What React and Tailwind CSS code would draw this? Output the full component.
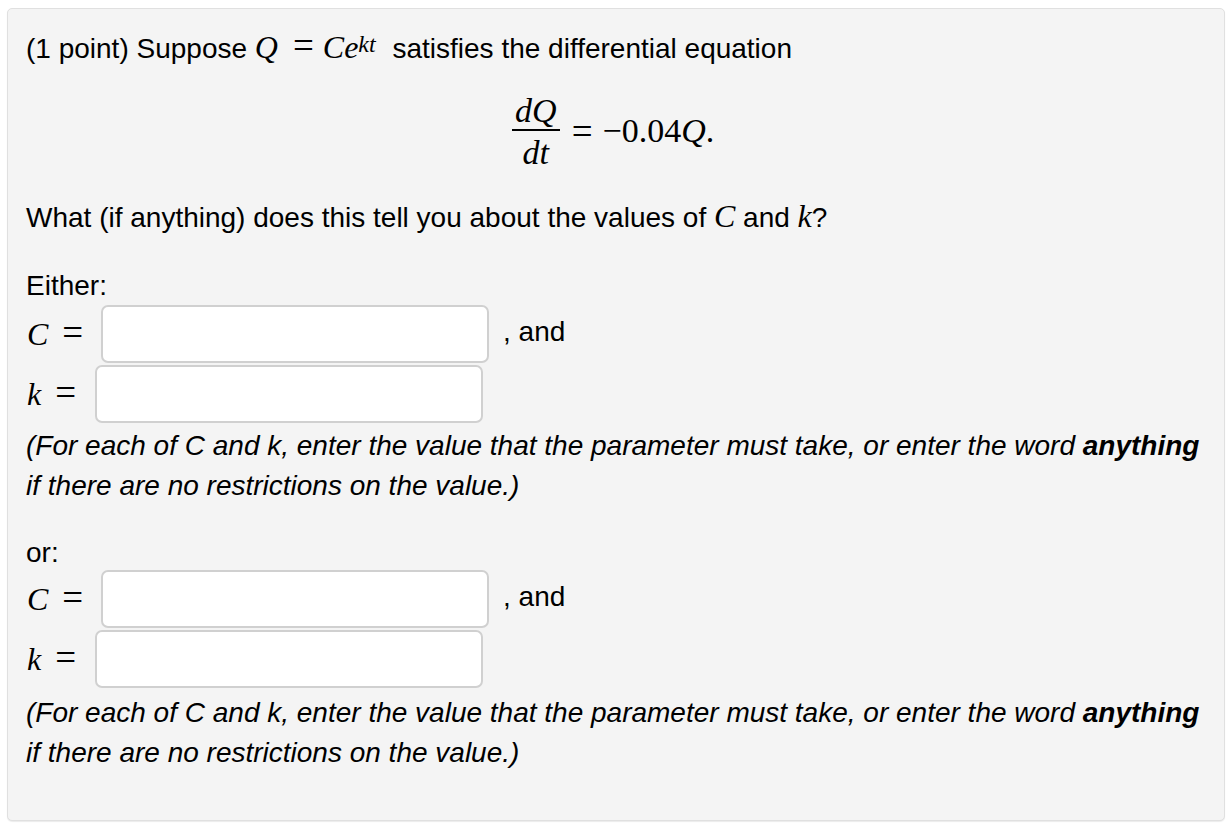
const mathFont = { fontFamily: '"Liberation Serif", "Times New Roman", serif' };

function M({ children, className = "" }) {
  return (
    <span className={`italic ${className}`} style={mathFont}>
      {children}
    </span>
  );
}

function Eq({ className = "mx-[11px]" }) {
  return (
    <span className={`not-italic text-[37px] leading-none ${className}`} style={mathFont}>
      =
    </span>
  );
}

function AnswerRows({ className = "" }) {
  return (
    <div className={className}>
      <div className="flex items-center h-[58px]">
        <span className="text-[32px] w-[75px] shrink-0 pl-[1px]" style={mathFont}>
          <M>C</M>
          <Eq className="ml-[14px]" />
        </span>
        <input className="w-[388px] h-[58px] bg-white border-2 border-[#d0d0d0] rounded-[7px] outline-none" />
        <span className="ml-[14px] -mt-[5px]">, and</span>
      </div>
      <div className="flex items-center h-[58px] mt-[2px]">
        <span className="text-[32px] w-[69px] shrink-0 pl-[1px]" style={mathFont}>
          <M>k</M>
          <Eq className="ml-[14px]" />
        </span>
        <input className="w-[388px] h-[58px] bg-white border-2 border-[#d0d0d0] rounded-[7px] outline-none" />
      </div>
    </div>
  );
}

function Note({ className = "" }) {
  return (
    <p className={`italic ${className}`}>
      (For each of C and k, enter the value that the parameter must take, or enter the word{" "}
      <b className="font-bold">anything</b>
      <br />
      if there are no restrictions on the value.)
    </p>
  );
}

export default function App() {
  return (
    <div
      className="w-[1232px] h-[830px] bg-white pt-[8px] pl-[7px]"
      style={{ fontFamily: '"Liberation Sans", Arial, sans-serif' }}
    >
      <div className="w-[1218px] h-[813px] bg-[#f4f4f4] border border-[#e0e0e0] rounded-[5px] shadow-[0_1px_1px_rgba(0,0,0,0.08)] pl-[18px] pt-[18px] text-[28px] leading-[40px] text-black">
        <p>
          (1 point) Suppose{" "}
          <span className="text-[32px]" style={mathFont}>
            <M>Q</M>
            <Eq className="ml-[15px] mr-[9px]" />
            <M>C</M>
            <M>e</M>
            <sup className="text-[24px] italic relative -top-[6px] mr-[9px]">kt</sup>
          </span>{" "}
          satisfies the differential equation
        </p>

        <div className="h-[82px] flex items-center justify-center text-[34px] mt-[22px] pr-[24px]" style={mathFont}>
          <div className="flex items-center">
            <div className="flex flex-col items-center leading-[36px] italic">
              <span className="px-[3px]">dQ</span>
              <span className="block w-[48px] h-[2px] bg-black" />
              <span className="px-[3px] pt-[4px]">dt</span>
            </div>
            <Eq className="ml-[12px] mr-[10px] -mt-[2px]" />
            <span className="-mt-[2px]">
              −0.04<span className="italic">Q</span>.
            </span>
          </div>
        </div>

        <p className="mt-[23px]">
          What (if anything) does this tell you about the values of{" "}
          <M className="text-[32px]">C</M> and <M className="text-[32px]">k</M>?
        </p>

        <p className="mt-[28px]">Either:</p>
        <AnswerRows className="-mt-[1px]" />
        <Note className="mt-[3px]" />

        <p className="mt-[27px]">or:</p>
        <AnswerRows className="-mt-[3px]" />
        <Note className="mt-[5px]" />
      </div>
    </div>
  );
}
